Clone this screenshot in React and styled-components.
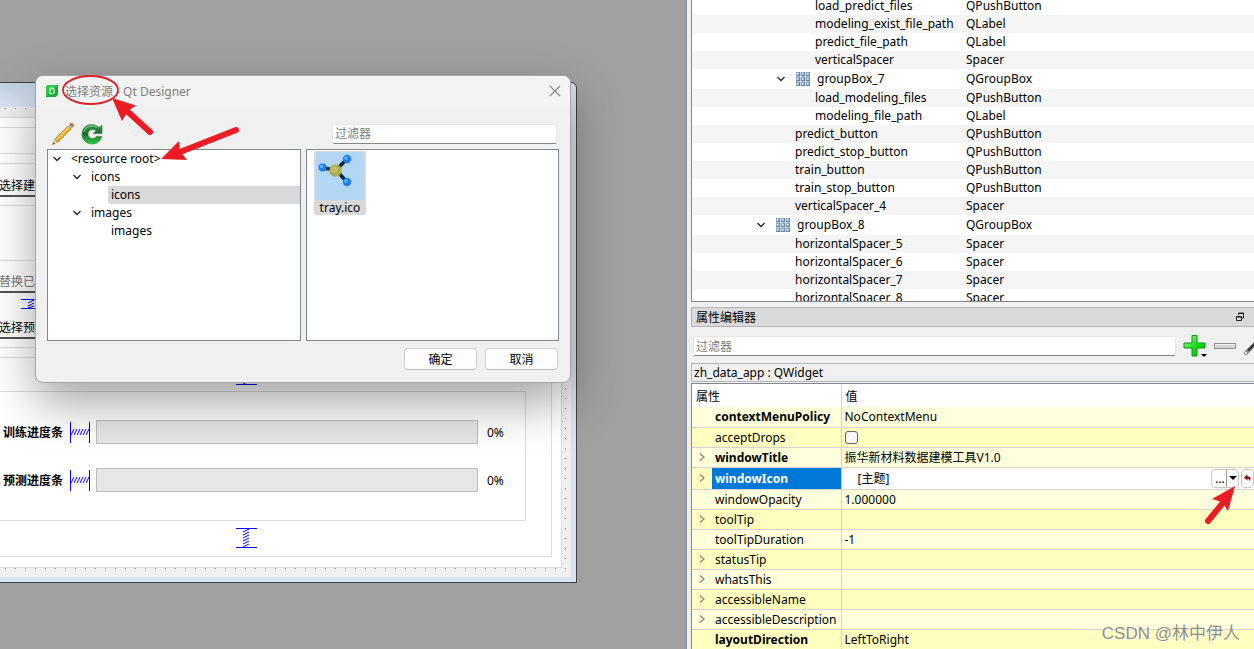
import React from 'react'
import styled, { createGlobalStyle } from 'styled-components'

const treeRows = [
    { depth: 2, name: 'load_predict_files', type: 'QPushButton' },
    { depth: 2, name: 'modeling_exist_file_path', type: 'QLabel' },
    { depth: 2, name: 'predict_file_path', type: 'QLabel' },
    { depth: 2, name: 'verticalSpacer', type: 'Spacer' },
    { depth: 1, name: 'groupBox_7', type: 'QGroupBox', group: true },
    { depth: 2, name: 'load_modeling_files', type: 'QPushButton' },
    { depth: 2, name: 'modeling_file_path', type: 'QLabel' },
    { depth: 1, name: 'predict_button', type: 'QPushButton' },
    { depth: 1, name: 'predict_stop_button', type: 'QPushButton' },
    { depth: 1, name: 'train_button', type: 'QPushButton' },
    { depth: 1, name: 'train_stop_button', type: 'QPushButton' },
    { depth: 1, name: 'verticalSpacer_4', type: 'Spacer' },
    { depth: 0, name: 'groupBox_8', type: 'QGroupBox', group: true },
    { depth: 1, name: 'horizontalSpacer_5', type: 'Spacer' },
    { depth: 1, name: 'horizontalSpacer_6', type: 'Spacer' },
    { depth: 1, name: 'horizontalSpacer_7', type: 'Spacer' },
    { depth: 1, name: 'horizontalSpacer_8', type: 'Spacer' },
]

const properties = [
    { name: 'contextMenuPolicy', value: 'NoContextMenu', bold: true },
    { name: 'acceptDrops', check: true },
    { name: 'windowTitle', value: '振华新材料数据建模工具V1.0', bold: true, arrow: true },
    { name: 'windowIcon', value: '[主题]', bold: true, arrow: true, selected: true },
    { name: 'windowOpacity', value: '1.000000' },
    { name: 'toolTip', value: '', arrow: true },
    { name: 'toolTipDuration', value: '-1' },
    { name: 'statusTip', value: '', arrow: true },
    { name: 'whatsThis', value: '', arrow: true },
    { name: 'accessibleName', value: '', arrow: true },
    { name: 'accessibleDescription', value: '', arrow: true },
    { name: 'layoutDirection', value: 'LeftToRight', bold: true },
]

const resources = [
    { depth: 0, name: '<resource root>', open: true },
    { depth: 1, name: 'icons', open: true },
    { depth: 2, name: 'icons', selected: true },
    { depth: 1, name: 'images', open: true },
    { depth: 2, name: 'images' },
]

const Chevron = () => (
    <svg width="10" height="10" viewBox="0 0 10 10" fill="none" stroke="#222" strokeWidth="1.3">
        <path d="M1.5 3 L5 6.5 L8.5 3" />
    </svg>
)

const ChevronRight = () => (
    <svg width="8" height="10" viewBox="0 0 8 10" fill="none" stroke="#8a8a70" strokeWidth="1.3">
        <path d="M2 1.5 L6 5 L2 8.5" />
    </svg>
)

const GridIcon = () => (
    <svg width="14" height="14" viewBox="0 0 14 14">
        {[0, 5, 10].map(y => [0, 5, 10].map(x => (
            <g key={`${x}-${y}`}>
                <rect x={x} y={y} width="4.400" height="4.400" rx="0.6" fill="#64809b" />
                <rect x={x} y={y} width="3.200" height="3.200" rx="0.6" fill="#8fadc9" />
                <rect x={x + 1} y={y + 1} width="1.6" height="1.6" fill="#cfe3f4" />
            </g>
        )))}
    </svg>
)

const DesignerLogo = () => (
    <svg width="14" height="14" viewBox="0 0 14 14">
        <path d="M2.5 1 H13 V10.5 L10.5 13 H1 V2.5 Z" fill="#2cc84a" />
        <path d="M13 1 V10.5 L10.5 13 H1 Z" fill="#119a2b" opacity="0.6" />
        <path d="M5.2 4.2 H7 C10 4.2 10 9.6 7 9.6 H5.2 Z" fill="none" stroke="#c8f5cb" strokeWidth="1.2" />
    </svg>
)

const PencilIcon = () => (
    <svg width="24" height="24" viewBox="0 0 24 24">
        <path d="M1.5 22.5 L4 17 L7 20 Z" fill="#ecd0a0" stroke="#9a7a48" strokeWidth="0.5" />
        <path d="M1.5 22.5 L2.3 20.4 L3.7 21.8 Z" fill="#333" />
        <path d="M4 17 L17 4 L20 7 L7 20 Z" fill="#e9a224" stroke="#a87c2a" strokeWidth="0.6" />
        <path d="M5 17.200 L17.4 4.800 L18.4 5.8 L6 18.200 Z" fill="#ffd65c" />
        <path d="M17 4 L18.8 2.2 L21.8 5.2 L20 7 Z" fill="#a9b1b8" />
        <path d="M18.600 2.400 C19.6 0.8 21 0.8 22.2 1.8 C23.3 3 23.2 4.400 21.6 5.4 Z" fill="#c06a48" />
    </svg>
)

const ReloadIcon = () => (
    <svg width="22" height="22" viewBox="0 0 22 22">
        <defs>
            <linearGradient id="reload" x1="0" y1="0" x2="0" y2="1">
                <stop offset="0" stopColor="#3f9a4c" />
                <stop offset="0.5" stopColor="#17692a" />
                <stop offset="1" stopColor="#2ed03a" />
            </linearGradient>
        </defs>
        <path
            d="M21 2 V10.5 H12.2 L15 7.8 C12 5 7 6.6 7 11 C7 15.6 12.5 17.3 15.3 13.4 H20.8 C19 18.5 15.5 21 11 21 C5.2 21 1 16.6 1 11 C1 2.3 11.5 -1.8 18.2 4.6 Z"
            fill="url(#reload)" stroke="#2c8b3c" strokeWidth="0.6"
        />
        <path d="M3 9 C4 3.5 11 1.3 16 4.5" fill="none" stroke="#7cc487" strokeWidth="1.2" />
    </svg>
)

const CloseIcon = () => (
    <svg width="12" height="12" viewBox="0 0 12 12" stroke="#8c8c8c" strokeWidth="1.2">
        <path d="M1 1 L11 11 M11 1 L1 11" />
    </svg>
)

const TrayIcon = () => (
    <svg width="48" height="48" viewBox="0 0 48 48">
        <path d="M7 16 L20 18 M31 7 L20 18 L31 30" fill="none" stroke="#10243c" strokeWidth="3.5" />
        <circle cx="6.500" cy="15.500" r="4" fill="#1c7ff0" />
        <circle cx="31" cy="7" r="4.200" fill="#1c7ff0" />
        <circle cx="31" cy="30" r="4.200" fill="#1c7ff0" />
        <circle cx="5.500" cy="14.500" r="1.800" fill="#5cb4ff" />
        <circle cx="30" cy="6" r="1.800" fill="#5cb4ff" />
        <circle cx="30" cy="29" r="1.800" fill="#5cb4ff" />
        <circle cx="19.500" cy="18.500" r="6.200" fill="#a9ab4e" />
        <circle cx="18.500" cy="17.500" r="3.600" fill="#bfc05c" />
    </svg>
)

const PlusIcon = () => (
    <svg width="24" height="24" viewBox="0 0 24 24">
        <defs>
            <linearGradient id="plus" x1="0" y1="0" x2="1" y2="1">
                <stop offset="0" stopColor="#a6f79a" />
                <stop offset="0.5" stopColor="#1fdc1f" />
                <stop offset="1" stopColor="#00b400" />
            </linearGradient>
        </defs>
        <path d="M9 1.500 H14 V9 H22 V14 H14 V22 H9 V14 H1 V9 H9 Z" fill="url(#plus)" stroke="#0d9b12" />
        <path d="M18 20 H24 L21 23 Z" fill="#000" />
    </svg>
)

const MinusIcon = () => (
    <svg width="22" height="6" viewBox="0 0 22 6">
        <rect x="0.5" y="0.5" width="21" height="5" fill="#d5d5d5" stroke="#929292" />
        <path d="M1 1.500 H21" stroke="#f4f4f4" />
    </svg>
)

const WrenchIcon = () => (
    <svg width="20" height="20" viewBox="0 0 20 20">
        <path d="M3 17 L16 4" stroke="#888" strokeWidth="4" strokeLinecap="round" />
        <path d="M5 14.500 L16 3.500" stroke="#2f2f2f" strokeWidth="2" />
        <circle cx="3" cy="17" r="1.200" fill="#eee" />
    </svg>
)

const FloatIcon = () => (
    <svg width="10" height="10" viewBox="0 0 10 10" fill="none" stroke="#222">
        <path d="M3.500 3 V1 H8.500 V6 H7 M3 1.500 H9" />
        <path d="M1.500 4.500 H6.500 V8.500 H1.500 Z M1 5 H7" />
    </svg>
)

const HSpring = () => (
    <svg width="20" height="21" viewBox="0 0 20 21" stroke="#0000ff" shapeRendering="crispEdges" aria-hidden="true">
        <path d="M0.500 0 V21 M19.500 0 V21" />
        <path
            d="M1 13 L4 7 M4 13 L7 7 M7 13 L10 7 M10 13 L13 7 M13 13 L16 7 M16 13 L19 7"
            shapeRendering="auto"
        />
    </svg>
)

const VSpring = () => (
    <svg width="21" height="20" viewBox="0 0 21 20" stroke="#0000ff" aria-hidden="true">
        <path d="M0 0.500 H21 M0 19.500 H21" />
        <path d="M7 4 L13 1 M7 7 L13 4 M7 10 L13 7 M7 13 L13 10 M7 16 L13 13 M7 19 L13 16" />
    </svg>
)

const MiniSpring = () => (
    <svg width="21" height="10" viewBox="0 0 21 10" stroke="#0000ff" aria-hidden="true">
        <path d="M0 0.500 H21 M0 9.500 H21" />
        <path d="M7 4 L13 1 M7 7 L13 4 M7 9 L13 7" />
    </svg>
)

const Marks = () => (
    <MarkLayer viewBox="0 0 1254 649" width="1254" height="649" aria-hidden="true">
        <ellipse cx="90.500" cy="90" rx="27.500" ry="14" fill="none" stroke="#e02028" strokeWidth="1.800" />
        <g fill="#ed1c24" stroke="#ed1c24">
            <path d="M150 132 L127 111" strokeWidth="6" strokeLinecap="round" />
            <path d="M112 98 L136 105.500 L128 111 L122 121 Z" stroke="none" />
            <path d="M236 130 L180 152" strokeWidth="6" strokeLinecap="round" />
            <path d="M161 159 L179 141 L180 151 L187 160 Z" stroke="none" />
            <path d="M1208 521 L1226 499" strokeWidth="6" strokeLinecap="round" />
            <path d="M1235 486 L1212 499 L1222 502 L1228 511 Z" stroke="none" />
        </g>
    </MarkLayer>
)

const FormWindow = () => (
    <FormFrame>
        <FormTitleBar />
        <FormClient>
            <FormPanel>
                <Strip />
                <HiddenForms>
                    <CutRow $h={33}>选择建模</CutRow>
                    <Gap $h={9} $line />
                    <Gap $h={55} $line />
                    <CutRow $h={32} $muted>替换已有</CutRow>
                    <SpringRow><MiniSpring /></SpringRow>
                    <CutRow $h={23}>选择预测</CutRow>
                    <Gap $h={8} />
                </HiddenForms>
                <ProgressPanel>
                    <SpringSlot $h={33}><VSpring /></SpringSlot>
                    <ProgressGroup>
                        {['训练进度条', '预测进度条'].map(label => (
                            <ProgressRow key={label}>
                                <ProgressLabel>{label}</ProgressLabel>
                                <HSpring />
                                <ProgressBar role="progressbar" aria-label={label} aria-valuenow={0} />
                                <Percent>0%</Percent>
                            </ProgressRow>
                        ))}
                    </ProgressGroup>
                    <SpringSlot $h={35}><VSpring /></SpringSlot>
                </ProgressPanel>
            </FormPanel>
        </FormClient>
    </FormFrame>
)

const ResourceDialog = () => (
    <Dialog role="dialog" aria-labelledby="dialog-title">
        <DialogTitleBar>
            <DesignerLogo />
            <DialogTitle id="dialog-title">选择资源 - Qt Designer</DialogTitle>
            <CloseButton aria-label="Close"><CloseIcon /></CloseButton>
        </DialogTitleBar>
        <DialogBody>
            <DialogTools>
                <ToolButton aria-label="Edit"><PencilIcon /></ToolButton>
                <ToolButton aria-label="Reload"><ReloadIcon /></ToolButton>
                <DialogFilter aria-label="过滤器" placeholder="过滤器" />
            </DialogTools>
            <Panes>
                <Pane>
                    {resources.map(item => (
                        <ResourceRow key={`${item.depth}${item.name}`} $depth={item.depth}>
                            <Toggle>{item.open && <Chevron />}</Toggle>
                            <ResourceName $selected={item.selected}>{item.name}</ResourceName>
                        </ResourceRow>
                    ))}
                </Pane>
                <FilePane>
                    <FileItem>
                        <FileThumb><TrayIcon /></FileThumb>
                        tray.ico
                    </FileItem>
                </FilePane>
            </Panes>
            <DialogActions>
                <DialogButton>确定</DialogButton>
                <DialogButton>取消</DialogButton>
            </DialogActions>
        </DialogBody>
    </Dialog>
)

const ObjectInspector = () => (
    <Inspector>
        <InspectorTable>
            <colgroup>
                <col width="271" />
                <col />
            </colgroup>
            <tbody>
                {treeRows.map(row => (
                    <InspectorRow key={row.name} $group={row.group}>
                        <td>
                            <ObjectName $depth={row.depth} $group={row.group}>
                                {row.group && <Chevron />}
                                {row.group && <GridIcon />}
                                {row.name}
                            </ObjectName>
                        </td>
                        <td>{row.type}</td>
                    </InspectorRow>
                ))}
            </tbody>
        </InspectorTable>
    </Inspector>
)

const PropertyEditor = () => (
    <>
        <DockTitle>
            属性编辑器
            <FloatButton aria-label="Float"><FloatIcon /></FloatButton>
        </DockTitle>
        <PropertyTools>
            <PropertyFilter aria-label="过滤器" placeholder="过滤器" />
            <ToolButton aria-label="Add"><PlusIcon /></ToolButton>
            <ToolButton aria-label="Remove"><MinusIcon /></ToolButton>
            <ToolButton aria-label="Configure"><WrenchIcon /></ToolButton>
        </PropertyTools>
        <ObjectLine>zh_data_app : QWidget</ObjectLine>
        <PropertyFrame>
            <PropertyTable>
                <colgroup>
                    <col width="149" />
                    <col />
                </colgroup>
                <thead>
                    <tr><th>属性</th><th>值</th></tr>
                </thead>
                <tbody>
                    {properties.map(prop => (
                        <PropertyRow key={prop.name} $selected={prop.selected}>
                            <td>
                                <PropertyCell>
                                    <Expander>{prop.arrow && <ChevronRight />}</Expander>
                                    <PropertyName $bold={prop.bold} $selected={prop.selected}>{prop.name}</PropertyName>
                                </PropertyCell>
                            </td>
                            <td>
                                <ValueCell $indent={prop.selected}>
                                    {prop.check ? <Check type="checkbox" aria-label={prop.name} /> : prop.value}
                                    {prop.selected && (
                                        <ValueActions>
                                            <SplitButton aria-label="Choose resource">
                                                <Dots>...</Dots>
                                                <svg width="8" height="5" viewBox="0 0 8 5"><path d="M0 0 H8 L4 4 Z" /></svg>
                                            </SplitButton>
                                            <ResetButton aria-label="Reset">
                                                <svg width="8" height="8" viewBox="0 0 8 8">
                                                    <path d="M0 3.500 L3.500 0.500 V2.500 C6.500 2.300 7.500 5 5.500 7.500 C5.800 5.500 5 4.700 3.500 4.700 V6.500 Z" fill="#990000" />
                                                </svg>
                                            </ResetButton>
                                        </ValueActions>
                                    )}
                                </ValueCell>
                            </td>
                        </PropertyRow>
                    ))}
                </tbody>
            </PropertyTable>
        </PropertyFrame>
    </>
)

export default function App() {
    return (
        <Shell>
            <GlobalStyle />
            <Workspace>
                <FormWindow />
                <ResourceDialog />
            </Workspace>
            <Dock>
                <ObjectInspector />
                <PropertyEditor />
            </Dock>
            <Marks />
            <Watermark>CSDN @林中伊人</Watermark>
        </Shell>
    )
}

const GlobalStyle = createGlobalStyle`
    * {
        box-sizing: border-box;
    }
    body {
        margin: 0;
        overflow: hidden;
    }
    body, button, input {
        font-family: "Noto Sans", "Noto Sans CJK SC", sans-serif;
        font-size: 12px;
        color: #000;
    }
    button {
        padding: 0;
    }
    svg {
        flex: none;
        display: block;
    }
`;

const Shell = styled.main`
    position: relative;
    display: grid;
    grid-template-columns: 686px minmax(0, 1fr);
    height: 100vh;
    overflow: hidden;
`;

const Workspace = styled.section`
    position: relative;
    overflow: hidden;
    background: #a0a0a0;
`;

const FormFrame = styled.div`
    position: absolute;
    left: -40px;
    top: 82px;
    width: 617px;
    display: flex;
    flex-direction: column;
    border: 1px solid #404040;
    border-radius: 6px 6px 0 0;
    background: #d6e4f1;
    padding: 0 5px 5px 0;
`;

const FormTitleBar = styled.div`
    height: 24px;
    background: linear-gradient(#bfd0e2, #d9e6f3);
`;

const FormClient = styled.div`
    padding: 10px 9px 9px 0;
    background-color: #f0f0f0;
    background-image: conic-gradient(from 270deg at 1px 1px, #8c8c8c 90deg, transparent 0);
    background-size: 10px 10px;
    background-position: 4px 1px;
`;

const FormPanel = styled.div`
    display: flex;
    flex-direction: column;
    gap: 9px;
    padding: 9px 9px 10px 0;
    border: 1px solid #dcdcdc;
    background: #fff;
`;

const Strip = styled.div`
    height: 27px;
    border: 1px solid #dcdcdc;
`;

const HiddenForms = styled.div`
    border: 1px solid #dcdcdc;
`;

const CutRow = styled.div`
    height: ${p => p.$h}px;
    display: flex;
    align-items: flex-end;
    padding: 0 0 1px 36px;
    border-bottom: 2px solid #555;
    color: ${p => p.$muted ? '#777' : '#000'};
`;

const Gap = styled.div`
    height: ${p => p.$h}px;
    border-bottom: ${p => p.$line ? '1px solid #dcdcdc' : 'none'};
`;

const SpringRow = styled.div`
    height: 23px;
    padding: 6px 0 0 58px;
`;

const ProgressPanel = styled.div`
    display: flex;
    flex-direction: column;
    border: 1px solid #dcdcdc;
`;

const SpringSlot = styled.div`
    height: ${p => p.$h}px;
    padding-top: 7px;
    padding-left: 273px;
`;

const ProgressGroup = styled.div`
    display: flex;
    flex-direction: column;
    gap: 24px;
    margin-right: 25px;
    padding: 28px 17px 28px 39px;
    border: 1px solid #dcdcdc;
`;

const ProgressRow = styled.div`
    display: flex;
    align-items: center;
    gap: 6px;
    height: 24px;
`;

const ProgressLabel = styled.span`
    width: 61px;
    white-space: nowrap;
    font-weight: 700;
`;

const ProgressBar = styled.div`
    flex: 1;
    height: 24px;
    border: 1px solid #bcbcbc;
    background: #e6e6e6;
`;

const Percent = styled.span`
    width: 21px;
    margin-left: 3px;
`;

const Dialog = styled.div`
    position: absolute;
    left: 35px;
    top: 75px;
    width: 536px;
    border: 1px solid #a4a4a4;
    border-radius: 8px;
    background: #f0f0f0;
    box-shadow: 0 20px 48px rgba(0, 0, 0, 0.36);
    overflow: hidden;
`;

const DialogTitleBar = styled.div`
    display: flex;
    align-items: center;
    height: 29px;
    padding: 0 8px 0 9px;
    background: #f3f3f3;
    color: #808080;
`;

const DialogTitle = styled.div`
    flex: 1;
    padding-left: 6px;
`;

const CloseButton = styled.button`
    display: grid;
    place-items: center;
    width: 14px;
    height: 20px;
    border: 0;
    background: none;
`;

const DialogBody = styled.div`
    padding: 13px 11px 12px 11px;
`;

const DialogTools = styled.div`
    display: flex;
    align-items: center;
    gap: 6px;
    height: 31px;
    padding: 0 2px 0 4px;
`;

const ToolButton = styled.button`
    display: grid;
    place-items: center;
    border: 0;
    background: none;
`;

const DialogFilter = styled.input`
    width: 225px;
    height: 20px;
    margin-left: auto;
    padding: 0 2px;
    border: 1px solid #e6e6e6;
    border-bottom-color: #868686;
    border-radius: 2px;
    background: #fff;
    &::placeholder {
        color: #808080;
    }
`;

const Panes = styled.div`
    display: grid;
    grid-template-columns: 254px minmax(0, 1fr);
    gap: 5px;
`;

const Pane = styled.div`
    height: 192px;
    border: 1px solid #828790;
    background: #fff;
`;

const FilePane = styled(Pane)`
    padding: 1px 7px;
`;

const ResourceRow = styled.div`
    display: flex;
    align-items: center;
    height: 18px;
    padding-left: ${p => 4 + p.$depth * 20}px;
`;

const Toggle = styled.span`
    width: 16px;
`;

const ResourceName = styled.span`
    flex: 1;
    height: 18px;
    line-height: 17px;
    padding-left: 3px;
    border-radius: 2px 0 0 2px;
    background: ${p => p.$selected ? '#d9d9d9' : 'none'};
`;

const FileItem = styled.div`
    width: 52px;
    height: 64px;
    padding: 1px 2px;
    border-radius: 2px;
    background: #d9d9d9;
    text-align: center;
    line-height: 15px;
`;

const FileThumb = styled.div`
    height: 48px;
    background: #b3d6f4;
`;

const DialogActions = styled.div`
    display: flex;
    justify-content: flex-end;
    gap: 8px;
    padding-top: 7px;
    padding-right: 1px;
`;

const DialogButton = styled.button`
    width: 73px;
    height: 22px;
    border: 1px solid #d0d0d0;
    border-bottom-color: #bcbcbc;
    border-radius: 4px;
    background: #fdfdfd;
`;

const Dock = styled.aside`
    display: flex;
    flex-direction: column;
    min-width: 0;
    padding-left: 4px;
    border-left: 1px solid #868a92;
    background: #f0f0f0;
`;

const Inspector = styled.div`
    display: flex;
    flex-direction: column;
    justify-content: flex-end;
    height: 302px;
    flex: none;
    border: 1px solid #828790;
    border-width: 0 0 1px 1px;
    background: #fff;
    overflow: hidden;
`;

const InspectorTable = styled.table`
    width: 100%;
    margin-bottom: -6px;
    border-collapse: collapse;
    table-layout: fixed;
    td {
        padding: 0 0 0 3px;
        line-height: 16px;
        white-space: nowrap;
    }
`;

const InspectorRow = styled.tr`
    height: ${p => p.$group ? 20 : 18}px;
    &:nth-child(even) {
        background: #f5f5f5;
    }
`;

const ObjectName = styled.div`
    display: flex;
    align-items: center;
    gap: ${p => p.$group ? 7 : 0}px;
    padding-left: ${p => (p.$group ? 61 : 80) + p.$depth * 20}px;
    svg + svg {
        margin-left: 3px;
    }
`;

const DockTitle = styled.div`
    display: flex;
    align-items: center;
    justify-content: space-between;
    flex: none;
    height: 20px;
    margin-top: 5px;
    padding: 0 9px 0 4px;
    border: 1px solid #b4b4b4;
    border-right: 0;
    background: #d9d9d9;
`;

const FloatButton = styled.button`
    border: 0;
    background: none;
`;

const PropertyTools = styled.div`
    display: flex;
    align-items: center;
    flex: none;
    gap: 7px;
    height: 36px;
    margin-right: -12px;
    padding: 2px 3px 0 2px;
`;

const PropertyFilter = styled.input`
    flex: 1;
    min-width: 0;
    height: 20px;
    padding: 0 2px;
    border: 1px solid #e6e6e6;
    border-bottom-color: #868686;
    border-radius: 2px;
    background: #fff;
    &::placeholder {
        color: #808080;
    }
`;

const ObjectLine = styled.div`
    flex: none;
    height: 19px;
    line-height: 17px;
    padding-left: 2px;
    border: 1px solid #b4b4b4;
    border-right: 0;
`;

const PropertyFrame = styled.div`
    flex: 1;
    margin-top: 1px;
    min-height: 0;
    border: 1px solid #828790;
    border-width: 1px 0 0 1px;
    background: #fff;
    overflow: hidden;
`;

const PropertyTable = styled.table`
    width: 100%;
    border-collapse: collapse;
    table-layout: fixed;
    th {
        height: 23px;
        padding: 0 4px;
        text-align: left;
        font-weight: 400;
    }
    th + th, td + td {
        border-left: 1px solid #d4d4d4;
    }
    td {
        padding: 0;
        border-bottom: 1px solid #d4d4d4;
    }
`;

const PropertyRow = styled.tr`
    height: ${p => p.$selected ? 22 : 20}px;
    background: #ffffdc;
    &:nth-child(even) {
        background: #ffffbf;
    }
    td + td {
        background: ${p => p.$selected ? '#fff' : 'none'};
    }
`;

const PropertyCell = styled.div`
    display: flex;
    align-items: stretch;
    height: 100%;
`;

const Expander = styled.span`
    display: grid;
    place-items: center;
    width: 20px;
`;

const PropertyName = styled.span`
    flex: 1;
    padding-left: 3px;
    line-height: ${p => p.$selected ? 21 : 19}px;
    white-space: nowrap;
    font-weight: ${p => p.$bold ? 700 : 400};
    color: ${p => p.$selected ? '#fff' : '#000'};
    background: ${p => p.$selected ? '#0078d7' : 'none'};
`;

const ValueCell = styled.div`
    display: flex;
    align-items: center;
    height: 19px;
    padding-left: ${p => p.$indent ? 16 : 3}px;
`;

const Check = styled.input`
    appearance: none;
    width: 13px;
    height: 13px;
    margin: 0;
    border: 1px solid #666;
    border-radius: 3px;
    background: #f5f5f5;
`;

const ValueActions = styled.span`
    display: flex;
    gap: 2px;
    margin-left: auto;
`;

const SplitButton = styled.button`
    display: flex;
    align-items: center;
    gap: 2px;
    width: 28px;
    height: 19px;
    padding-left: 2px;
    border: 1px solid #c8c8c8;
    border-radius: 4px;
    background: #fdfdfd;
`;

const Dots = styled.span`
    width: 13px;
    border-right: 1px solid #999;
`;

const ResetButton = styled.button`
    display: grid;
    place-items: center;
    width: 13px;
    height: 19px;
    border: 1px solid #c8c8c8;
    border-radius: 4px;
    background: #fdfdfd;
`;

// annotation arrows drawn over both panes
const MarkLayer = styled.svg`
    position: absolute;
    left: 0;
    top: 0;
    pointer-events: none;
`;

const Watermark = styled.div`
    position: absolute;
    right: 14px;
    bottom: 5px;
    font-family: "Liberation Sans", "Noto Sans CJK SC", sans-serif;
    font-size: 17px;
    color: #8f8f82;
    text-shadow: 1px 1px 0 #fff;
    pointer-events: none;
`;
